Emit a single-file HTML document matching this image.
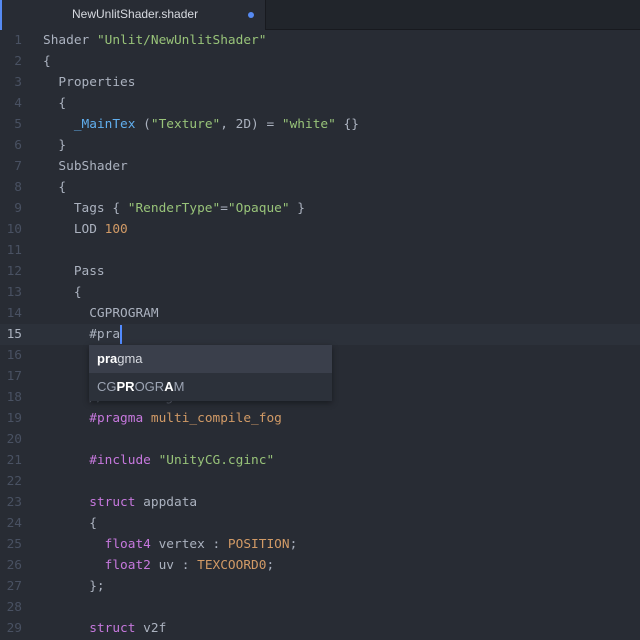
<!DOCTYPE html>
<html><head><style>
body{margin:0;width:640px;height:640px;overflow:hidden;background:#282c34;font-family:"DejaVu Sans Mono","Liberation Mono",monospace;}
.tabbar{position:absolute;left:0;top:0;width:640px;height:30px;background:#282c34;}
.tab{position:absolute;left:0;top:0;width:265px;height:30px;background:#282c34;border-left:2px solid #568af2;box-sizing:border-box;}
.tab span{position:absolute;left:70px;top:7px;font:12px "Liberation Sans",sans-serif;color:#d7dae0;}
.dot{position:absolute;left:246px;top:12px;width:6px;height:6px;border-radius:50%;background:#568af2;}
.rest{position:absolute;left:265px;top:0;width:375px;height:29px;background:#21252b;border-left:1px solid #181a1f;border-bottom:1px solid #181a1f;}
.line{position:absolute;left:0;height:21px;line-height:21px;font-size:12.8px;white-space:pre;color:#abb2bf;width:640px;}
.ln{position:absolute;left:0;width:22px;text-align:right;color:#495162;}
.code{position:absolute;left:43px;}
.cur{background:#2c313a;}
.cur .ln{color:#abb2bf}
.s{color:#98c379}.k{color:#c678dd}.o{color:#d19a66}.b{color:#61afef}.c{color:#5c6370;font-style:italic}
.pop{position:absolute;left:89px;top:345px;width:243px;height:56px;background:#2c313a;box-shadow:0 2px 6px rgba(0,0,0,.4);font:13px "Liberation Sans",sans-serif;}
.pop div{height:28px;line-height:28px;padding-left:8px;color:#9da5b4;}
.pop .sel{background:#3a3f4b;color:#d7dae0}
.pop b{color:#fff}
.caret{position:absolute;left:120px;top:325px;width:2px;height:19px;background:#528bff;}
</style></head><body>
<div class="tabbar"><div class="tab"><span>NewUnlitShader.shader</span><div class="dot"></div></div><div class="rest"></div></div>
<div class="line" style="top:30px"><span class="ln">1</span><span class="code">Shader <span class="s">"Unlit/NewUnlitShader"</span></span></div>
<div class="line" style="top:51px"><span class="ln">2</span><span class="code">{</span></div>
<div class="line" style="top:72px"><span class="ln">3</span><span class="code">  Properties</span></div>
<div class="line" style="top:93px"><span class="ln">4</span><span class="code">  {</span></div>
<div class="line" style="top:114px"><span class="ln">5</span><span class="code">    <span class="b">_MainTex</span> (<span class="s">"Texture"</span>, 2D) = <span class="s">"white"</span> {}</span></div>
<div class="line" style="top:135px"><span class="ln">6</span><span class="code">  }</span></div>
<div class="line" style="top:156px"><span class="ln">7</span><span class="code">  SubShader</span></div>
<div class="line" style="top:177px"><span class="ln">8</span><span class="code">  {</span></div>
<div class="line" style="top:198px"><span class="ln">9</span><span class="code">    Tags { <span class="s">"RenderType"</span>=<span class="s">"Opaque"</span> }</span></div>
<div class="line" style="top:219px"><span class="ln">10</span><span class="code">    LOD <span class="o">100</span></span></div>
<div class="line" style="top:240px"><span class="ln">11</span></div>
<div class="line" style="top:261px"><span class="ln">12</span><span class="code">    Pass</span></div>
<div class="line" style="top:282px"><span class="ln">13</span><span class="code">    {</span></div>
<div class="line" style="top:303px"><span class="ln">14</span><span class="code">      CGPROGRAM</span></div>
<div class="line cur" style="top:324px;left:0"><span class="ln">15</span><span class="code">      #pra</span></div>
<div class="line" style="top:345px"><span class="ln">16</span></div>
<div class="line" style="top:366px"><span class="ln">17</span></div>
<div class="line" style="top:387px"><span class="ln">18</span><span class="code c">      // make fog work</span></div>
<div class="line" style="top:408px"><span class="ln">19</span><span class="code">      <span class="k">#pragma</span> <span class="o">multi_compile_fog</span></span></div>
<div class="line" style="top:429px"><span class="ln">20</span></div>
<div class="line" style="top:450px"><span class="ln">21</span><span class="code">      <span class="k">#include</span> <span class="s">"UnityCG.cginc"</span></span></div>
<div class="line" style="top:471px"><span class="ln">22</span></div>
<div class="line" style="top:492px"><span class="ln">23</span><span class="code">      <span class="k">struct</span> appdata</span></div>
<div class="line" style="top:513px"><span class="ln">24</span><span class="code">      {</span></div>
<div class="line" style="top:534px"><span class="ln">25</span><span class="code">        <span class="k">float4</span> vertex : <span class="o">POSITION</span>;</span></div>
<div class="line" style="top:555px"><span class="ln">26</span><span class="code">        <span class="k">float2</span> uv : <span class="o">TEXCOORD0</span>;</span></div>
<div class="line" style="top:576px"><span class="ln">27</span><span class="code">      };</span></div>
<div class="line" style="top:597px"><span class="ln">28</span></div>
<div class="line" style="top:618px"><span class="ln">29</span><span class="code">      <span class="k">struct</span> v2f</span></div>
<div class="caret"></div>
<div class="pop"><div class="sel"><b>pra</b>gma</div><div>CG<b>PR</b>OGR<b>A</b>M</div></div>
</body></html>
